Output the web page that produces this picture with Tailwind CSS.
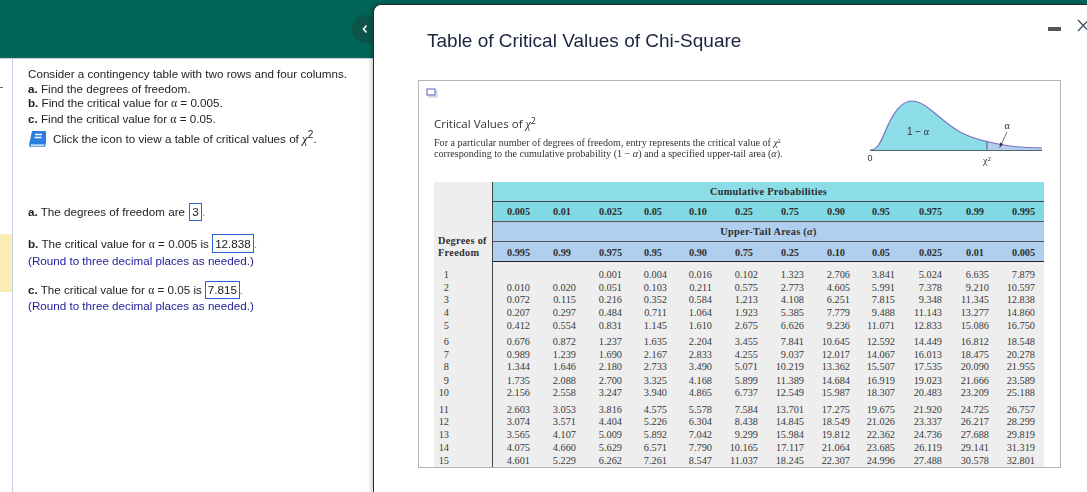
<!DOCTYPE html>
<html lang="en">
<head>
    <meta charset="UTF-8">
    <title>Table of Critical Values of Chi-Square</title>
    <script src="https://cdn.jsdelivr.net/npm/@tailwindcss/browser@4"></script>
</head>
<body class="bg-white">
<div class="relative w-[1087px] h-[492px] overflow-hidden font-['Liberation_Sans',sans-serif] text-[11.65px] text-[#222] blur-[0.25px]">

    <!-- top bar -->
    <div class="h-[59px] bg-[#006456] border-b border-[#c9d3e4]"></div>

    <!-- left question panel -->
    <div class="flex h-[433px]">
        <div class="w-[13px] shrink-0 border-r border-[#c5d0e6] pt-[28px]">
            <div class="w-[3px] h-[1px] bg-[#666]"></div>
            <div class="h-[58px] bg-[#fbebb5] mt-[146px]"></div>
        </div>
        <div class="pl-[15px] pt-[8px] w-[360px]">
            <p class="leading-[14.7px]">Consider a contingency table with two rows and four columns.</p>
            <p class="leading-[14.7px]"><b>a.</b> Find the degrees of freedom.</p>
            <p class="leading-[14.7px]"><b>b.</b> Find the critical value for <span class="font-['Liberation_Serif',serif]">α</span> = 0.005.</p>
            <p class="leading-[14.7px]"><b>c.</b> Find the critical value for <span class="font-['Liberation_Serif',serif]">α</span> = 0.05.</p>
            <div class="flex items-center mt-[1px] h-[20px]">
                <svg class="w-[19px] h-[18px] shrink-0" viewBox="0 0 19 18">
                    <path d="M4 1h13a1 1 0 0 1 1 1v11l-1.200 4H2.500A1.800 1.800 0 0 1 1 15z" fill="#2b7de0"/>
                    <path d="M2.500 14.300h14l-.8 2.200H3z" fill="#bcd8f6"/>
                    <path d="M7 4.500h7M6.500 7.500h7" stroke="#fff" stroke-width="1.400"/>
                </svg>
                <span class="ml-[6px] -mt-[1px]">Click the icon to view a table of critical values of <i class="font-['Liberation_Serif',serif] text-[13px]">χ</i><sup class="text-[10px]">2</sup>.</span>
            </div>

            <div class="flex items-center mt-[54px] h-[18px]">
                <span><b>a.</b> The degrees of freedom are</span>
                <span class="ml-[4px] w-[13px] h-[18px] border border-[#2a62d8] flex items-center justify-center">3</span>
                <span class="text-[#888]">.</span>
            </div>

            <div class="flex items-center mt-[14px] h-[18px]">
                <span><b>b.</b> The critical value for <span class="font-['Liberation_Serif',serif]">α</span> = 0.005 is</span>
                <span class="ml-[3px] w-[42px] h-[19px] border border-[#2a62d8] flex items-center justify-center">12.838</span>
                <span class="text-[#888]">.</span>
            </div>
            <p class="text-[#1f1a9c] leading-[16px]">(Round to three decimal places as needed.)</p>

            <div class="flex items-center mt-[12px] h-[18px]">
                <span><b>c.</b> The critical value for <span class="font-['Liberation_Serif',serif]">α</span> = 0.05 is</span>
                <span class="ml-[3px] w-[35px] h-[18px] border border-[#2a62d8] flex items-center justify-center">7.815</span>
                <span class="text-[#888]">.</span>
            </div>
            <p class="text-[#1f1a9c] -mt-[1px] leading-[16px]">(Round to three decimal places as needed.)</p>
        </div>
    </div>

    <!-- collapse button -->
    <div class="absolute left-[352px] top-[15px] w-[28px] h-[28px] rounded-full bg-[#0c5349] flex items-center pl-[9px]">
        <svg class="w-[8px] h-[10px]" viewBox="0 0 8 10"><path d="M5.500 1.500 2.500 5l3 3.500" fill="none" stroke="#fff" stroke-width="1.600"/></svg>
    </div>

    <!-- modal -->
    <div class="absolute left-[373px] top-[4px] w-[714px] h-[488px] bg-white border-l border-t border-[#2b2b2b] rounded-tl-[8px] shadow-[-2px_0_4px_rgba(0,0,0,0.2)] pl-[44px] pt-[23px]">
        <div class="absolute left-[674px] top-[22px] w-[13px] h-[4px] bg-[#555]"></div>
        <svg class="absolute left-[703px] top-[14px] w-[14px] h-[14px]" viewBox="0 0 14 14"><path d="M1 1l10.500 11M11.500 1 1 12" fill="none" stroke="#3c4c5c" stroke-width="1.300"/></svg>

        <h1 class="text-[19px] leading-[26px] text-[#1b2440] ml-[9px]">Table of Critical Values of Chi-Square</h1>

        <div id="frame" class="w-[643px] h-[388px] border border-[#b5b5b5] mt-[26px] pl-[15px] pt-[7px] blur-[0.3px]">
            <svg class="w-[12px] h-[10px] -ml-[8px]" viewBox="0 0 12 10"><rect x="3" y="3" width="8" height="6" fill="#e6e8f7" stroke="#c3c8ea"/><rect x="1" y="1" width="8" height="6" fill="#fff" stroke="#5a60c0"/></svg>

            <div class="flex justify-between h-[84px] relative">
                <div class="pt-[18px]">
                    <p class="font-['Open_Sans',sans-serif] text-[11.5px] leading-[16px] text-[#333]">Critical Values of <i class="font-['Liberation_Serif',serif] text-[12px]">χ</i><sup class="text-[9px]">2</sup></p>
                    <p class="font-['Liberation_Serif',serif] text-[10.1px] leading-[11.3px] text-[#333] mt-[5px]">For a particular number of degrees of freedom, entry represents the critical value of <i>χ</i><sup class="text-[6px]">2</sup><br>corresponding to the cumulative probability (1 − <i>α</i>) and a specified upper-tail area (<i>α</i>).</p>
                </div>
                <svg class="absolute left-[435px] -top-[16px] w-[176px] h-[88px] overflow-visible" viewBox="0 0 176 88">
                    <path d="M1 68C8 68 11 62 16 50C24 31 32 19 43 19C57 19 70 38 91 50C101 55 110 58 118 59.500V68z" fill="#8cdde8"/>
                    <path d="M118 59.500C135 64 150 66 173 66V68H118z" fill="#b3cfee"/>
                    <path d="M1 68C8 68 11 62 16 50C24 31 32 19 43 19C57 19 70 38 91 50C101 55 110 58 118 59.500C135 64 150 66 173 66" fill="none" stroke="#7a70c4" stroke-width="1.200"/>
                    <path d="M1 68.500H173M118 59.500V68" stroke="#55666e" stroke-width="1.100" fill="none"/>
                    <path d="M138 50 132 63" stroke="#333" stroke-width="0.700"/>
                    <path d="M130.500 66 131 60.500 134 62z" fill="#333"/>
                    <text x="1" y="79" font-size="9" font-family="Liberation Sans" text-anchor="middle" fill="#333">0</text>
                    <text x="118" y="82" font-size="10" font-family="Liberation Serif" text-anchor="middle" fill="#333">χ<tspan font-size="7" dy="-3">2</tspan></text>
                    <text x="49" y="53" font-size="10" font-family="Liberation Sans" text-anchor="middle" fill="#333">1 − <tspan font-family="Liberation Serif">α</tspan></text>
                    <text x="138" y="47" font-size="10" font-family="Liberation Serif" text-anchor="middle" fill="#333">α</text>
                </svg>
            </div>

            <!-- chi-square table -->
            <div class="flex w-[610px] h-[285px] bg-[#eeeeee] font-['Liberation_Serif',serif] text-[10.3px] text-[#3a3a3a] leading-[12px]">
                <div class="w-[58px] shrink-0">
                    <div class="h-[80px] pl-[4px] pt-[53px] font-bold text-[#2e2e2e] tracking-[0.3px]">Degrees of<br>Freedom</div>
                    <div id="dfCol" class="pt-[7px]"></div>
                </div>
                <div class="flex-1 border-l-[1.5px] border-[#444]">
                    <div class="h-[20px] bg-[#8cdde8] border-b border-[#444] flex items-center justify-center font-bold text-[#2e2e2e] tracking-[0.3px]">Cumulative Probabilities</div>
                    <div id="cumRow" class="h-[20px] bg-[#80d9e3] border-b border-[#555] grid grid-cols-[37px_46px_46px_45px_45px_46px_46px_46px_45px_47px_47px_46px] items-center font-bold text-[#2e2e2e]"></div>
                    <div class="h-[20px] pt-[1px] bg-[#b0cfee] border-b border-[#555] flex items-center justify-center font-bold text-[#2e2e2e] tracking-[0.3px]">Upper-Tail Areas (<i>α</i>)</div>
                    <div id="tailRow" class="h-[20px] pt-[3px] bg-[#b0cfee] border-b border-[#222] grid grid-cols-[37px_46px_46px_45px_45px_46px_46px_46px_45px_47px_47px_46px] items-center font-bold text-[#2e2e2e]"></div>
                    <div id="body" class="pt-[7px]"></div>
                </div>
            </div>
        </div>
    </div>
</div>

<script>
    const cum = ["0.005","0.01","0.025","0.05","0.10","0.25","0.75","0.90","0.95","0.975","0.99","0.995"];
    const tail = ["0.995","0.99","0.975","0.95","0.90","0.75","0.25","0.10","0.05","0.025","0.01","0.005"];
    const rows = [
        ["","","0.001","0.004","0.016","0.102","1.323","2.706","3.841","5.024","6.635","7.879"],
        ["0.010","0.020","0.051","0.103","0.211","0.575","2.773","4.605","5.991","7.378","9.210","10.597"],
        ["0.072","0.115","0.216","0.352","0.584","1.213","4.108","6.251","7.815","9.348","11.345","12.838"],
        ["0.207","0.297","0.484","0.711","1.064","1.923","5.385","7.779","9.488","11.143","13.277","14.860"],
        ["0.412","0.554","0.831","1.145","1.610","2.675","6.626","9.236","11.071","12.833","15.086","16.750"],
        ["0.676","0.872","1.237","1.635","2.204","3.455","7.841","10.645","12.592","14.449","16.812","18.548"],
        ["0.989","1.239","1.690","2.167","2.833","4.255","9.037","12.017","14.067","16.013","18.475","20.278"],
        ["1.344","1.646","2.180","2.733","3.490","5.071","10.219","13.362","15.507","17.535","20.090","21.955"],
        ["1.735","2.088","2.700","3.325","4.168","5.899","11.389","14.684","16.919","19.023","21.666","23.589"],
        ["2.156","2.558","3.247","3.940","4.865","6.737","12.549","15.987","18.307","20.483","23.209","25.188"],
        ["2.603","3.053","3.816","4.575","5.578","7.584","13.701","17.275","19.675","21.920","24.725","26.757"],
        ["3.074","3.571","4.404","5.226","6.304","8.438","14.845","18.549","21.026","23.337","26.217","28.299"],
        ["3.565","4.107","5.009","5.892","7.042","9.299","15.984","19.812","22.362","24.736","27.688","29.819"],
        ["4.075","4.660","5.629","6.571","7.790","10.165","17.117","21.064","23.685","26.119","29.141","31.319"],
        ["4.601","5.229","6.262","7.261","8.547","11.037","18.245","22.307","24.996","27.488","30.578","32.801"]
    ];
    // row pitch differs between the groups of five
    const heights = [12.6,12.4,12.6,13.4,16,13,12.5,13.5,12.5,16.5,12.5,12.5,13,13,12];

    document.getElementById("cumRow").innerHTML = cum.map(v => `<span class="ml-auto w-[23px] text-left">${v}</span>`).join("");
    document.getElementById("tailRow").innerHTML = tail.map(v => `<span class="ml-auto w-[23px] text-left">${v}</span>`).join("");

    document.getElementById("dfCol").innerHTML = rows.map((r, i) =>
        `<div class="w-[15px] text-right whitespace-nowrap" style="height:${heights[i]}px">${i + 1}</div>`).join("");

    document.getElementById("body").innerHTML = rows.map((r, i) =>
        `<div class="grid grid-cols-[37px_46px_46px_45px_45px_46px_46px_46px_45px_47px_47px_46px]" style="height:${heights[i]}px">` +
        r.map(v => `<span class="text-right whitespace-nowrap">${v}</span>`).join("") + `</div>`).join("");
</script>
</body>
</html>
